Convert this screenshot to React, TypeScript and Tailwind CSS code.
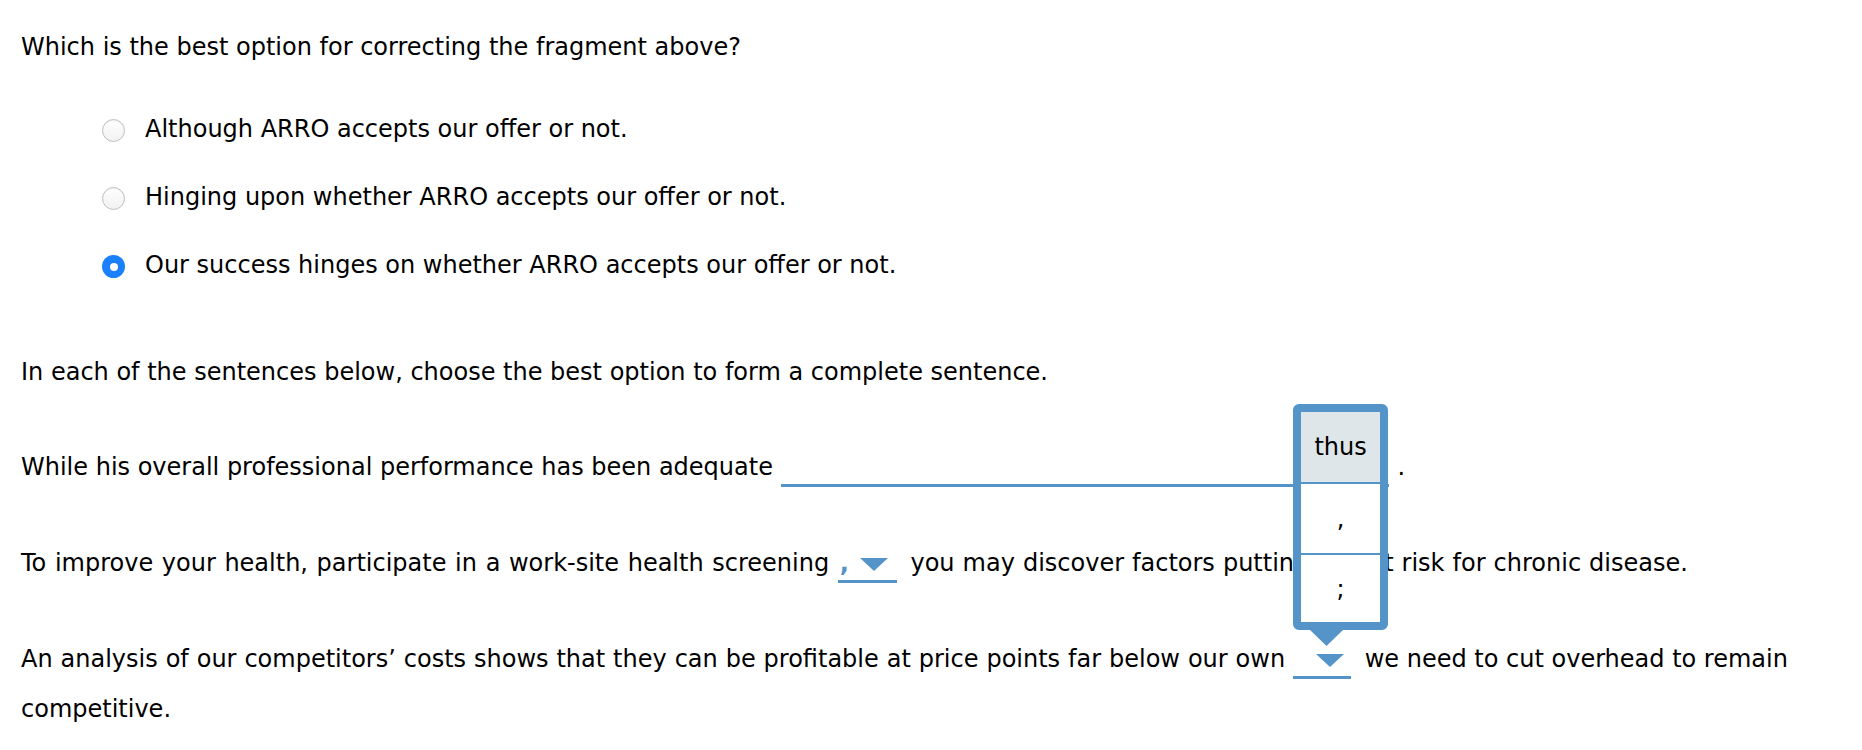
import React from "react";

const BLUE = "#5594c8";

function Caret({ className = "" }: { className?: string }) {
  return (
    <svg
      width="28"
      height="13"
      viewBox="0 0 28 13"
      className={"inline-block align-baseline " + className}
    >
      <path d="M0 0H28L14 13Z" fill={BLUE} />
    </svg>
  );
}

function Radio({ checked }: { checked?: boolean }) {
  if (checked) {
    return (
      <span className="mt-[4px] flex h-[23px] w-[23px] shrink-0 items-center justify-center rounded-full bg-[#1b80fb]">
        <span className="h-[8px] w-[8px] rounded-full bg-white" />
      </span>
    );
  }
  return (
    <span className="mt-[4px] h-[23px] w-[23px] shrink-0 rounded-full border border-[#bfbfbf] bg-gradient-to-b from-white to-[#f1f1f1] shadow-[inset_0_1px_1px_rgba(0,0,0,0.06)]" />
  );
}

function Popup() {
  return (
    <div className="absolute bottom-[46px] left-0 z-10 w-[95px]">
      <div className="flex flex-col overflow-hidden rounded-[6px] border-[8px] border-[#5594c8] bg-white text-black">
        <div className="flex h-[70px] items-center justify-center bg-[#dfe6e9] leading-[28px]">
          thus
        </div>
        <div className="flex h-[71px] items-center justify-center border-t-2 border-[#5594c8] leading-[28px]">
          ,
        </div>
        <div className="flex h-[69px] items-center justify-center border-t-2 border-[#5594c8] leading-[28px]">
          ;
        </div>
      </div>
      <svg
        width="35"
        height="17"
        viewBox="0 0 35 17"
        className="absolute left-[16px] top-[calc(100%-1px)]"
      >
        <path d="M0 0H35L17.5 17Z" fill={BLUE} />
      </svg>
    </div>
  );
}

export default function App() {
  const options = [
    { text: "Although ARRO accepts our offer or not.", checked: false },
    { text: "Hinging upon whether ARRO accepts our offer or not.", checked: false },
    { text: "Our success hinges on whether ARRO accepts our offer or not.", checked: true },
  ];

  return (
    <div className="min-h-[750px] bg-white px-[21px] pt-[33px] font-['DejaVu_Sans','Verdana',sans-serif] text-[24px] text-black">
      <p className="leading-[28px]">Which is the best option for correcting the fragment above?</p>

      <div className="mt-[54px] flex flex-col gap-[40px] pl-[81px]">
        {options.map((o) => (
          <label key={o.text} className="flex items-start gap-[20px] leading-[28px]">
            <Radio checked={o.checked} />
            <span>{o.text}</span>
          </label>
        ))}
      </div>

      <p className="mt-[68px] leading-[50px]">
        In each of the sentences below, choose the best option to form a complete sentence.
      </p>

      <p className="mt-[45px] leading-[50px]">
        While his overall professional performance has been adequate{" "}
        <span className="inline-block w-[608px] border-b-[3px] border-[#5594c8] pb-[3px] leading-[28px]">
          &nbsp;
        </span>
        <span className="ml-[9px]">.</span>
      </p>

      <p className="mt-[46px] leading-[50px]">
        <span className="[word-spacing:1px]">
          To improve your health, participate in a work-site health screening{" "}
        </span>
        <span className="mr-[6px] inline-block w-[59px] border-b-[3px] border-[#5594c8] pb-[3px] pl-[2px] font-bold leading-[28px] text-[#5594c8]">
          ,<Caret className="ml-[11px]" />
        </span>{" "}
        <span className="[word-spacing:0.4px]">
          you may discover factors putting you at risk for chronic disease.
        </span>
      </p>

      <p className="mt-[46px] leading-[50px]">
        <span className="[word-spacing:0.3px]">
          An analysis of our competitors’ costs shows that they can be profitable at price points far below our own{" "}
        </span>
        <span className="relative mr-[6px] inline-block w-[58px] border-b-[3px] border-[#5594c8] pb-[3px] pl-[23px] leading-[28px]">
          <Caret />
          <Popup />
        </span>{" "}
        we need to cut overhead to remain competitive.
      </p>
    </div>
  );
}
